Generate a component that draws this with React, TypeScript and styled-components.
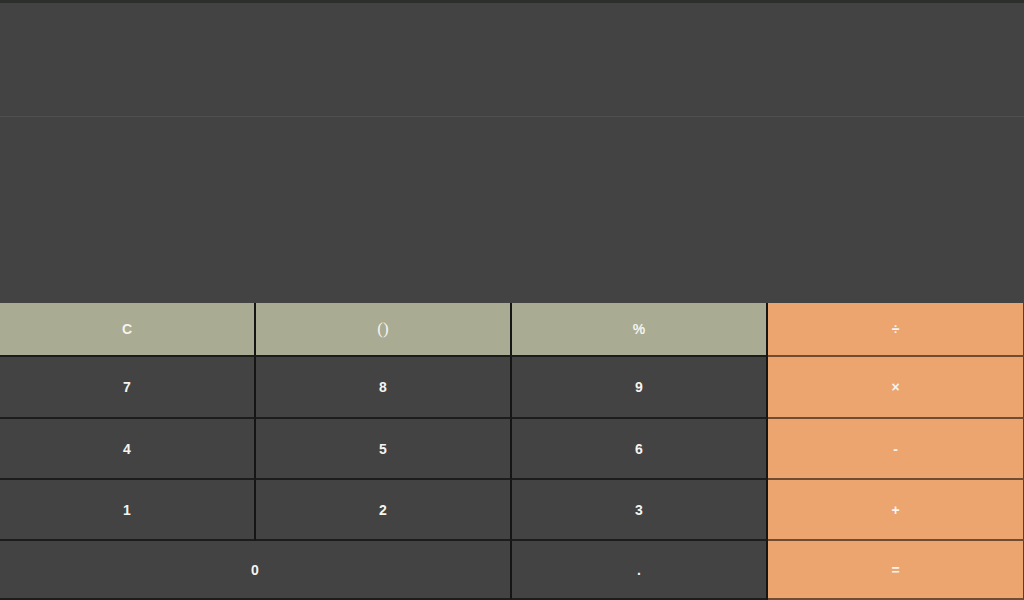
import React from "react";
import styled, { createGlobalStyle } from "styled-components";

const Global = createGlobalStyle`
  html, body { margin: 0; padding: 0; background: #434343; }
  body { font-family: "Liberation Sans", Arial, sans-serif; overflow: hidden; }
`;

const Page = styled.div`
  width: 1024px;
  height: 600px;
  display: flex;
  flex-direction: column;
  background: #434343;
  border-top: 3px solid #2d2f2d;
  box-sizing: border-box;
`;

const Expression = styled.div`
  height: 113px;
  border-bottom: 1px solid #4f4f4f;
  background: #434343;
`;

const Result = styled.div`
  height: 186px;
  background: #434343;
`;

const Keypad = styled.div`
  flex: 1;
  display: grid;
  grid-template-columns: repeat(4, 1fr);
  grid-template-rows: 54px 62px 61px 61px 1fr;
`;

type Kind = "fn" | "num" | "op";

const Key = styled.button<{ $kind: Kind; $span?: number; $serif?: boolean }>`
  grid-column: span ${(p) => p.$span ?? 1};
  border: none;
  margin: 0;
  padding: 0;
  border-right: ${(p) => (p.$kind === "op" ? "1px solid rgba(40,30,20,0.75)" : "2px solid #151515")};
  border-bottom: 2px solid ${(p) => (p.$kind === "op" ? "rgba(60,40,25,0.7)" : "#1c1c1c")};
  background: ${(p) =>
    p.$kind === "fn" ? "#aaab93" : p.$kind === "op" ? "#eca56e" : "#434343"};
  color: #f4f4f0;
  font-family: ${(p) =>
    p.$serif ? `"Liberation Serif", "Times New Roman", serif` : `"Liberation Sans", Arial, sans-serif`};
  font-weight: ${(p) => (p.$serif ? 400 : 700)};
  font-size: ${(p) => (p.$serif ? "17px" : "14px")};
  display: flex;
  align-items: center;
  justify-content: center;
  box-sizing: border-box;
  cursor: pointer;
`;

const keys: { label: string; kind: Kind; span?: number; serif?: boolean }[] = [
  { label: "C", kind: "fn" },
  { label: "()", kind: "fn", serif: true },
  { label: "%", kind: "fn" },
  { label: "÷", kind: "op" },
  { label: "7", kind: "num" },
  { label: "8", kind: "num" },
  { label: "9", kind: "num" },
  { label: "×", kind: "op" },
  { label: "4", kind: "num" },
  { label: "5", kind: "num" },
  { label: "6", kind: "num" },
  { label: "-", kind: "op" },
  { label: "1", kind: "num" },
  { label: "2", kind: "num" },
  { label: "3", kind: "num" },
  { label: "+", kind: "op" },
  { label: "0", kind: "num", span: 2 },
  { label: ".", kind: "num" },
  { label: "=", kind: "op" },
];

export default function App() {
  return (
    <>
      <Global />
      <Page>
        <Expression />
        <Result />
        <Keypad>
          {keys.map((k) => (
            <Key key={k.label} $kind={k.kind} $span={k.span} $serif={k.serif}>
              {k.label}
            </Key>
          ))}
        </Keypad>
      </Page>
    </>
  );
}
